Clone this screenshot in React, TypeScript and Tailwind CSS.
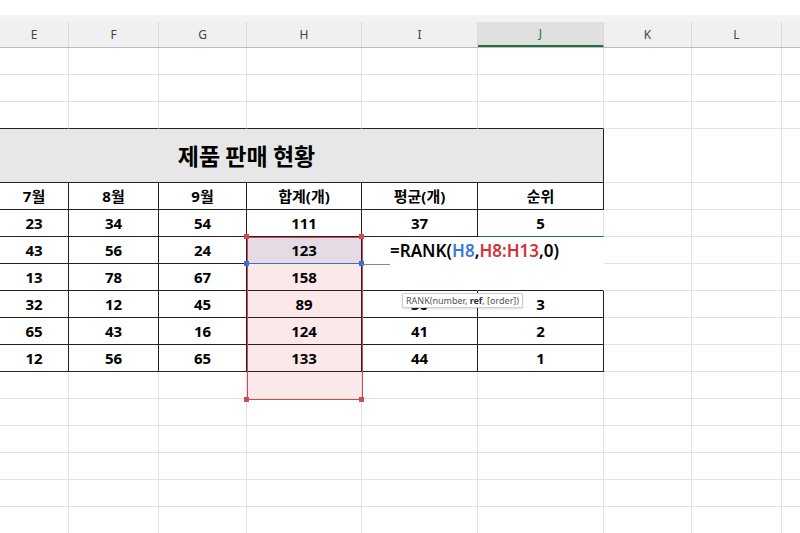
const W = [69, 90, 88, 115, 116, 126, 88, 90, 40];
const LET = ["E", "F", "G", "H", "I", "J", "K", "L", ""];
const G = "#e1e1e1";
const B = "#222";
type C = { t?: string; r?: string; b?: string; bg?: string };

function Row({ cells, h = 27 }: { cells: C[]; h?: number }) {
  return (
    <div className="flex" style={{ height: h }}>
      {W.map((w, i) => {
        const c = cells[i] || {};
        return (
          <div
            key={i}
            className="shrink-0 flex items-center justify-center text-[15px] font-bold text-black"
            style={{ width: w, background: c.bg, borderRight: `1px solid ${c.r || G}`, borderBottom: `1px solid ${c.b || G}` }}
          >
            {c.t}
          </div>
        );
      })}
    </div>
  );
}

const tb = (t: string): C => ({ t, r: B, b: B });
const PINK = "#fbe9ea";

export default function App() {
  const data = [
    ["23", "34", "54", "111", "37", "5"],
    ["43", "56", "24", "123", "", ""],
    ["13", "78", "67", "158", "", ""],
    ["32", "12", "45", "89", "30", "3"],
    ["65", "43", "16", "124", "41", "2"],
    ["12", "56", "65", "133", "44", "1"],
  ];
  return (
    <div className="relative w-[800px] h-[533px] overflow-hidden bg-white" style={{ fontFamily: '"Noto Sans","Noto Sans CJK KR",sans-serif' }}>
      <div className="h-[15px] bg-white" />
      <div className="h-[7px] bg-[#f3f3f3]" />
      <div className="flex h-[26px] bg-[#f0f0f0] border-b border-[#bdbdbd]">
        {W.map((w, i) => (
          <div
            key={i}
            className={`shrink-0 flex items-center justify-center text-[12px] border-r border-[#d9d9d9] ${i === 5 ? "bg-[#e0e0e0] text-[#217346] border-b-2 border-b-[#217346]" : "text-[#444]"}`}
            style={{ width: w }}
          >
            {LET[i]}
          </div>
        ))}
      </div>
      <Row cells={[]} />
      <Row cells={[]} />
      <Row cells={[{ b: B }, { b: B }, { b: B }, { b: B }, { b: B }, { b: B }]} />
      <div className="flex h-[54px]">
        <div className="shrink-0 w-[604px] bg-[#e7e7e7] flex items-center justify-center text-[23px] font-bold text-black border-r border-b border-[#222] pr-[110px]" style={{ fontFamily: '"Noto Sans CJK KR",sans-serif' }}>
          제품 판매 현황
        </div>
        {[88, 90, 40].map((w, i) => (
          <div key={i} className="shrink-0 border-r border-b border-[#e1e1e1]" style={{ width: w }} />
        ))}
      </div>
      <Row cells={["7월", "8월", "9월", "합계(개)", "평균(개)", "순위"].map(tb)} />
      {data.map((r, ri) => {
        const cells: C[] = r.map(tb);
        if (ri >= 1) cells[3] = { ...cells[3], bg: ri === 1 ? "#e6dbe4" : PINK };
        if (ri === 0) cells[5] = { t: "5", r: G, b: "#217346" };
        if (ri === 1) { cells[4] = { r: "#fff", b: "#fff" }; cells[5] = { r: "#fff", b: "#fff" }; }
        if (ri === 2) { cells[4] = { r: "#fff", b: B }; cells[5] = { r: "#fff", b: B }; }
        return <Row key={ri} cells={cells} />;
      })}
      <Row cells={[{}, {}, {}, { bg: PINK }]} />
      {Array.from({ length: 5 }).map((_, i) => <Row key={i} cells={[]} />)}

      {/* selected range outline */}
      <div className="absolute left-[247px] top-[237px] w-[116px] h-[163px] border border-[#d04a52]" />
      <div className="absolute left-[248px] top-[263px] w-[114px] h-px bg-[#3b6fd0]" />
      {[[245, 235], [360, 235], [245, 262], [360, 262], [245, 398], [360, 398]].map(([x, y], i) => (
        <div key={i} className={`absolute w-[5px] h-[5px] ${i === 2 || i === 3 ? "bg-[#3b6fd0]" : "bg-[#d04a52]"}`} style={{ left: x - 1, top: y - 1 }} />
      ))}
      <div className="absolute left-[362px] top-[264px] w-[28px] h-px bg-[#888]" />
      <div className="absolute left-[390px] top-[242px] text-[17px] font-semibold text-black leading-none whitespace-nowrap">
        =RANK(<span className="text-[#3a78d8]">H8</span>,<span className="text-[#d0323b]">H8:H13</span>,0)
      </div>
      <div className="absolute left-[402px] top-[293px] h-[15px] px-[3px] bg-white border border-[#cfcfcf] text-[9px] text-[#555] leading-[13px] whitespace-nowrap shadow-sm">
        RANK(number, <b className="text-[#333]">ref</b>, [order])
      </div>
    </div>
  );
}
